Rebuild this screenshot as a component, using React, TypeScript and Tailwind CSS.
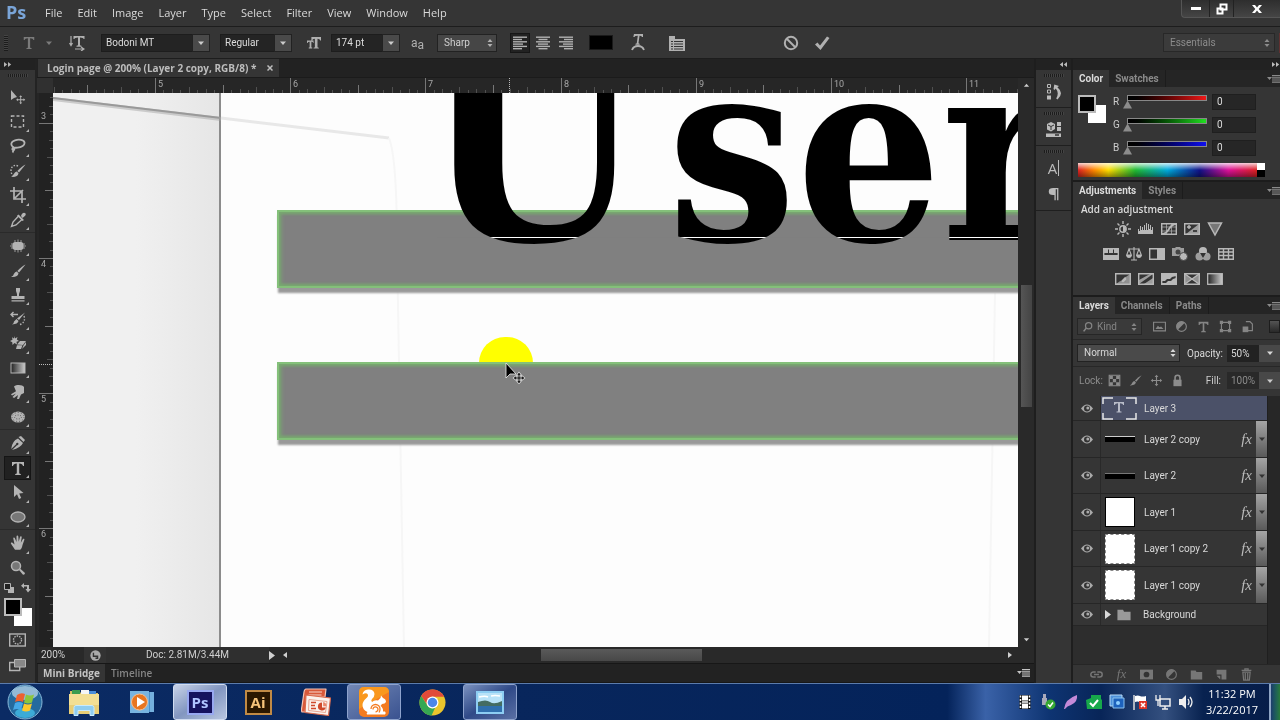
import React from "react";
import type { ReactNode } from "react";

type IconProps = { children: ReactNode; className?: string; box?: string };

const Icon = ({ children, className = "size-4", box = "0 0 16 16" }: IconProps) => (
  <svg viewBox={box} className={`shrink-0 ${className}`} fill="currentColor" aria-hidden="true">
    {children}
  </svg>
);

const line = { fill: "none", stroke: "currentColor", strokeWidth: 1.4 };

const Down = ({ className = "size-2" }: { className?: string }) => (
  <Icon className={className} box="0 0 8 8"><path d="M1 2.5h6L4 6z" /></Icon>
);

const UpDown = () => (
  <Icon className="h-2.5 w-2" box="0 0 8 10"><path d="M1.500 4h5L4 1zM1.500 6h5L4 9z" /></Icon>
);

const Brush = () => (
  <>
    <path d="M15.500 1.500 9 9.500 7.300 8Q12 3 15.500 1.500z" />
    <path d="M6.700 8.500 8.500 10.300Q8 14.500 1 14q2.500-1 3-3.300 1-2 2.700-2.200z" />
  </>
);

const MoveCross = () => (
  <path d="M8 1l2.300 2.700H8.700v3.600h3.600V5.700L15 8l-2.700 2.300V8.700H8.700v3.600h1.600L8 15l-2.300-2.700h1.600V8.700H3.700v1.600L1 8l2.700-2.300v1.600h3.600V3.700H5.700z" />
);

const Hand = () => (
  <path d="M4.500 14 1 8.700c-.6-1 .7-1.700 1.500-.9L4.500 9.600 3.300 3.500C3.100 2.300 4.500 2 4.900 3.200L6.500 7V1.500c0-1.300 1.700-1.300 1.800 0L8.700 6.800 10 2c.3-1.200 1.900-.8 1.700.4l-.9 5.400 2-3.600c.7-1 2-.4 1.500.8L12.500 10c-.3 2.300-1.200 4-2.300 4.800H5z" />
);

const FxText = ({ className = "" }: { className?: string }) => (
  <span className={`font-['Liberation_Serif',serif] italic ${className}`}>fx</span>
);

const toolGroups: { name: string; glyph: ReactNode; plain?: boolean }[][] = [
  [
    { name: "Move", plain: true, glyph: <><path d="M1 1v10l3-2 3-1z" /><g transform="translate(5.500 5.500) scale(.65)"><MoveCross /></g></> },
    { name: "Marquee", glyph: <rect x="1.500" y="2" width="12" height="11" {...line} strokeDasharray="3 2" /> },
    { name: "Lasso", glyph: <path d="M3.500 9.500C0 7 1 3.500 5 2.300s9-.5 9.500 2.200-3 5-7 5.200-4.500-.5-5 .8.500 2 1.500 1.500-.5-2.500-2-1.500M3.500 12q-.5 2-1 2.500" {...line} strokeWidth="1.800" /> },
    { name: "Quick selection", glyph: <><path d="M8 3C4 1 1 4 1 7.500S3 13 5 13" {...line} strokeDasharray="1.500 1.500" /><Brush /></> },
    { name: "Crop", glyph: <path d="M4 0v12h12M0 4h12v12M5 11 13 3" {...line} strokeWidth="1.700" /> },
    { name: "Eyedropper", glyph: <><path d="M9 3.500 3 10 1.500 14.500 6 13l6.500-6" {...line} /><path d="M8.500 2.500 14 8l-1.500 1L7 3.800zM11 4c1-3 3-4 4.300-2.700S15 4.500 12.500 6z" /></> },
  ],
  [
    { name: "Healing brush", glyph: <><rect x="2.500" y="4" width="11" height="8" rx="3" /><path d="M1 6h14M0 8h16M1 10h14M5 2v12M8 1.500v13M11 2v12" stroke="currentColor" strokeWidth=".8" /></> },
    { name: "Brush", glyph: <Brush /> },
    { name: "Clone stamp", glyph: <path d="M6 1h4v3L9 7v2h5.500v3h-13V9H7V7L6 4zM1.500 13.200h13v1.300h-13z" /> },
    { name: "History brush", glyph: <><path d="M15 1.500 9 9 7 7.500zM6.500 8 8.500 10Q8 13 2 13.500q2-1 2-3z" /><path d="M1 3.500h7M3.500 1 1 3.500 3.500 6" {...line} /><path d="M14 5q2 6-4 8.500" {...line} strokeDasharray="1.500 1.500" /></> },
    { name: "Eraser", glyph: <><path d="M7 8.500 10 5h6l-3 4zM7 9.200h5.500L11 13H6zM13.500 9.500 16 6v3l-4 4z" /><path d="m4 0 1 2.500L7.500 1 6.800 3.500 9 5 6.500 5.800 7 8.500 4.500 7 2.500 9l-.2-2.800L0 5l2.500-1.200L2 1.200 4 2.500z" /></> },
    { name: "Gradient", glyph: <><rect x="1" y="3" width="14" height="10" fill="url(#toolGradient)" stroke="currentColor" /></> },
    { name: "Smudge", glyph: <path d="M4 2.500C7 0 13 1 14 3v6l-3 1.500-2 4.500H7l1-4-4 3-1.500-1L6 9.500 2 11.500l-1-1.300 5-3z" /> },
    { name: "Sponge", glyph: <><ellipse cx="8" cy="8" rx="7" ry="5.500" /><ellipse cx="8" cy="8" rx="6" ry="4.500" fill="none" stroke="#444" strokeWidth=".8" strokeDasharray="1 2" /><ellipse cx="8" cy="8" rx="3.500" ry="2" fill="none" stroke="#444" strokeWidth=".8" strokeDasharray="1 1.500" /></> },
  ],
  [
    { name: "Pen", glyph: <><path d="m11 1 4 4-1.500 2-5-5z" /><path d="M8 3.500 13 8q-2 4.500-11 7L7 10.200a1.200 1.200 0 1 0-.9-.9L1.200 14Q2 6 8 3.500z" /></> },
    { name: "Type", glyph: <path d="M2 2h12v4h-1q-.4-2.200-3.800-2.400V13q0 1 1.600 1v1H5.200v-1q1.600 0 1.600-1V3.600Q3.400 3.800 3 6H2z" /> },
    { name: "Path selection", glyph: <path d="M4 1v12l3-2.700L9 15l2.200-1-2-4.500L13.500 9z" /> },
    { name: "Ellipse", glyph: <ellipse cx="8" cy="8" rx="7" ry="5" fill="#777" stroke="currentColor" strokeWidth="1.300" /> },
  ],
  [
    { name: "Hand", glyph: <Hand /> },
    { name: "Zoom", plain: true, glyph: <><circle cx="6" cy="6" r="4.500" fill="#777" stroke="currentColor" strokeWidth="1.500" /><path d="m9 10 1.300-1.300L15 13q0 2-2 1.800z" /></> },
  ],
];

const ToolRail = () => (
  <aside className="flex w-[37px] shrink-0 flex-col border-r-2 border-[#232323] bg-[#353535] text-[#b4b4b4]">
    <div className="flex h-[11px] shrink-0 items-center bg-[#222] pl-1">
      <Icon className="h-[5px] w-2" box="0 0 10 6"><path d="M0 0l4 3-4 3zM5 0l4 3-4 3z" /></Icon>
    </div>
    <div className="mx-auto mt-1 mb-2 h-[3px] w-5 shrink-0 bg-[repeating-linear-gradient(90deg,#1c1c1c_0_1px,#444_1px_2px)]" />
    {toolGroups.map((group, i) => (
      <div
        key={i}
        className={`flex shrink-0 flex-col ${["h-[148px]", "h-[196px]", "h-[99px]", "h-[49px]"][i]} ${i < 3 ? "mb-px border-b border-[#2a2a2a]" : ""}`}
      >
        {group.map((tool) => (
          <button
            key={tool.name}
            aria-label={tool.name}
            className={`relative mx-1 flex flex-1 items-center pl-[6px] ${tool.name === "Type" ? "bg-[#212121] outline outline-[#151515] -outline-offset-1" : ""}`}
          >
            <Icon className="size-4">{tool.glyph}</Icon>
            {!tool.plain && <Icon className="absolute right-[2px] bottom-[2px] size-[3px]" box="0 0 3 3"><path d="M3 0v3H0z" /></Icon>}
          </button>
        ))}
      </div>
    ))}
    <div className="flex h-4 shrink-0 items-center justify-between px-1">
      <Icon className="size-[10px]" box="0 0 10 10"><path d="M4 4h6v6H4z" /><path d="M.5.5h6v6h-6z" fill="#222" stroke="currentColor" /></Icon>
      <Icon className="size-[10px]" box="0 0 10 10"><path d="M3 0v2h5v4h2L7 9.500 4.500 6H6V3.500H3v2L0 2.700z" /></Icon>
    </div>
    <div className="relative mt-[2px] ml-1 size-7 shrink-0">
      <button aria-label="Background color" className="absolute right-0 bottom-0 size-[18px] bg-white" />
      <button aria-label="Foreground color" className="absolute top-0 left-0 size-[18px] border-2 border-[#bbb] bg-black" />
    </div>
    <button aria-label="Quick mask" className="mt-[5px] flex h-[18px] shrink-0 items-center pl-[9px]">
      <Icon className="h-[14px] w-[17px]" box="0 0 17 14"><rect x=".7" y="1" width="15.600" height="12" {...line} /><circle cx="8.500" cy="7" r="4" {...line} strokeDasharray="1.500 1" /></Icon>
    </button>
    <button aria-label="Screen mode" className="mt-[7px] flex h-[18px] shrink-0 items-center pl-[9px]">
      <Icon className="h-[14px] w-[17px]" box="0 0 17 14"><path d="M.7 4.500h10v8H.7z" {...line} /><path d="M5.500 1.500h11V9h-11z" fill="#888" stroke="currentColor" /></Icon>
    </button>
    <svg className="absolute size-0" aria-hidden="true">
      <defs>
        <linearGradient id="toolGradient"><stop stopColor="#222" /><stop offset="1" stopColor="#ccc" /></linearGradient>
      </defs>
    </svg>
  </aside>
);

const menus = ["File", "Edit", "Image", "Layer", "Type", "Select", "Filter", "View", "Window", "Help"];

const MenuBar = () => (
  <header className="flex h-[27px] shrink-0 items-start border-b border-[#1d1d1d] bg-[#353535]">
    <span className="w-9 pl-[6px] font-['Open_Sans',sans-serif] text-[18px] leading-6 font-bold text-[#7aa5d8]">Ps</span>
    <nav className="flex flex-1 gap-px pl-[2px] font-['Open_Sans',sans-serif] text-[11px] leading-[26px] text-[#dadada]">
      {menus.map((m) => <button key={m} className="px-[7px]">{m}</button>)}
    </nav>
    <div className="flex h-[18px] rounded-bl border-b border-l border-[#555] bg-gradient-to-b from-[#2e2e2e] to-[#454545] text-white">
      <button aria-label="Minimize" className="flex w-[27px] items-center justify-center"><Icon className="h-[3px] w-[10px]" box="0 0 10 3"><path d="M0 0h10v3H0z" /></Icon></button>
      <button aria-label="Restore" className="flex w-[25px] items-center justify-center border-x border-[#222]"><Icon className="size-3" box="0 0 12 12"><path d="M4.500 1.500h6v5h-6zM1.500 5.500h5v5h-5z" fill="none" stroke="currentColor" strokeWidth="2" /></Icon></button>
      <button aria-label="Close" className="flex w-[46px] items-center justify-center"><Icon className="h-2 w-[10px]" box="0 0 10 8"><path d="M0 0h3l2 2.500L7 0h3L6.700 4 10 8H7L5 5.500 3 8H0l3.300-4z" /></Icon></button>
    </div>
  </header>
);

const Combo = ({ label, value, wide }: { label: string; value: string; wide: string }) => (
  <label className="relative flex items-center">
    <select aria-label={label} className={`h-[18px] appearance-none border border-[#1d1d1d] bg-[#242424] pl-1 text-[10px] leading-4 text-[#dcdcdc] ${wide}`}><option>{value}</option></select>
    <span className="pointer-events-none absolute right-0 flex h-[18px] w-[18px] items-center justify-center border border-[#222] bg-[#4a4a4a] text-[#ccc]"><Down /></span>
  </label>
);

const AlignGlyph = ({ kind }: { kind: "left" | "center" | "right" }) => (
  <Icon className="h-[14px] w-[14px]" box="0 0 14 14">
    {[14, 9, 14, 10, 14, 9].map((w, i) => {
      const x = kind === "left" ? 0 : kind === "right" ? 14 - w : (14 - w) / 2;
      return <rect key={i} x={x} y={0.5 + i * 2.300} width={w} height="1.400" />;
    })}
  </Icon>
);

const OptionsBar = () => (
  <div className="flex h-8 shrink-0 items-center border-b border-[#1d1d1d] bg-[#353535] text-[#b0b0b0]">
    <div className="ml-1 h-4 w-1 bg-[repeating-linear-gradient(0deg,#1c1c1c_0_1px,#444_1px_2px)]" />
    <button aria-label="Tool preset" className="ml-[15px] flex items-center gap-[10px] text-[#7b7b7b]">
      <Icon className="size-3"><path d="M1 0h14v4h-1q-.4-2.200-4.500-2.200V14q0 1 2 1v1h-7v-1q2 0 2-1V1.800Q2.400 1.800 2 4H1z" /></Icon><Down />
    </button>
    <button aria-label="Text orientation" className="ml-4"><Icon className="size-4"><path d="M4.500 1h11v3h-1q0-1.500-3.500-1.500V10q0 .7 1.500.7v1H7.500v-1q1.500 0 1.500-.7V2.500Q5.500 2.500 5.500 4h-1z" /><path d="M2 1v9M.5 8 2 10.500 3.500 8M6 14h8M12 12l3 2-3 2" {...line} strokeWidth="1.200" /></Icon></button>
    <div className="ml-[16px] flex items-center gap-[10px]">
      <Combo label="Font family" value="Bodoni MT" wide="w-[109px]" />
      <Combo label="Font style" value="Regular" wide="w-[72px]" />
      <div className="ml-1 flex items-center gap-[9px]">
        <Icon className="h-3.5 w-4"><path d="M5 1h11v4h-1q0-2-3-2v9.500q0 .8 1.500.8v1h-6v-1q1.500 0 1.500-.8V3Q6 3 6 5H5zM0 5h7.500v3H7q0-1.500-2-1.500v6q0 .7 1 .7v1H2v-1q1 0 1-.7v-6Q.7 6.500.7 8H0z" /></Icon>
        <Combo label="Font size" value="174 pt" wide="w-[69px]" />
      </div>
    </div>
    <span aria-hidden="true" className="ml-[11px] w-[15px] text-[12px] leading-4">a<span className="relative top-[2px]">a</span></span>
    <label className="relative ml-[11px] flex items-center">
      <select aria-label="Anti-aliasing" className="h-[18px] w-[60px] appearance-none border border-[#222] bg-[#464646] pl-[6px] text-[10px] leading-4 text-[#cfcfcf]"><option>Sharp</option></select>
      <span className="pointer-events-none absolute right-[3px]"><UpDown /></span>
    </label>
    <div className="ml-[13px] flex items-center gap-[3px]">
      <button aria-label="Align left" className="flex size-5 items-center justify-center border border-[#161616] bg-[#222]"><AlignGlyph kind="left" /></button>
      <button aria-label="Align center" className="flex size-5 items-center justify-center"><AlignGlyph kind="center" /></button>
      <button aria-label="Align right" className="flex size-5 items-center justify-center"><AlignGlyph kind="right" /></button>
    </div>
    <button aria-label="Text color" className="ml-[13px] h-[15px] w-6 border border-[#1a1a1a] bg-black" />
    <button aria-label="Warp text" className="ml-[17px]"><Icon className="h-[17px] w-4" box="0 0 16 17"><path d="M4 0h9v3h-1q-.3-1.300-2.500-1.300L8.500 9q0 .7 1.200.8v1H5.500v-1q1.200 0 1.300-.8l1-7.300Q4.800 1.700 4.300 3h-1z" /><path d="M2 16q1.500-4 6-4t6 4" {...line} strokeWidth="1.800" /></Icon></button>
    <button aria-label="Character panel" className="ml-[23px]"><Icon className="size-4"><path d="M0 1h6v3h10v12H0z" /><path d="M2 6.500h2M5 6.500h9M2 9h2M5 9h9M2 11.500h2M5 11.500h9M2 14h2M5 14h9" stroke="#333" /></Icon></button>
    <button aria-label="Cancel" className="ml-[98px]"><Icon className="size-4"><circle cx="8" cy="8" r="6.200" fill="none" stroke="currentColor" strokeWidth="2" /><path d="m4 4 8 8" stroke="currentColor" strokeWidth="2" /></Icon></button>
    <button aria-label="Commit" className="ml-[15px]"><Icon className="size-4"><path d="M1 9.500 3.500 7.500 6 10.500 13 1.500 15.500 3 6.500 15z" /></Icon></button>
    <label className="relative ml-auto flex items-center">
      <select aria-label="Workspace" className="h-[19px] w-28 appearance-none border border-[#282828] bg-[#3b3b3b] pl-[6px] text-[10px] leading-4 text-[#8c8c8c]"><option>Essentials</option></select>
      <span className="pointer-events-none absolute right-1 text-[#8c8c8c]"><UpDown /></span>
    </label>
    <div className="ml-1 h-5 w-px bg-[#603030]" />
  </div>
);

const UNIT = 135.2;

const TopRuler = () => (
  <svg className="h-[15px] w-full min-w-0 flex-1 bg-[#262626]" aria-hidden="true">
    {Array.from({ length: 116 }, (_, i) => {
      const x = Math.round(102 + ((i - 12) * UNIT) / 16);
      const k = (i - 12 + 160) % 16;
      const h = k === 0 ? 15 : k === 8 ? 8 : k % 4 === 0 ? 6 : k % 2 === 0 ? 4 : 3;
      return <rect key={i} x={x} y={15 - h} width="1" height={h} fill={h > 6 ? "#777" : "#505050"} />;
    })}
    <path d="M456.500 0v15" stroke="#bbb" strokeDasharray="1 1" />
    {[5, 6, 7, 8, 9, 10, 11].map((n, i) => (
      <text key={n} x={105 + Math.round(i * UNIT)} y="9" fill="#a8a8a8" className="text-[9px]">{n}</text>
    ))}
  </svg>
);

const SideRuler = () => (
  <svg className="h-full w-[14px] shrink-0 bg-[#222]" aria-hidden="true">
    {Array.from({ length: 66 }, (_, i) => {
      const y = Math.round(165 + ((i - 19) * UNIT) / 16);
      const k = (i - 19 + 160) % 16;
      const h = k === 0 ? 14 : k === 8 ? 8 : k % 4 === 0 ? 6 : k % 2 === 0 ? 4 : 3;
      return <rect key={i} x={14 - h} y={y} width={h} height="1" fill={h > 6 ? "#777" : "#505050"} />;
    })}
    <path d="M0 271.500h14" stroke="#bbb" strokeDasharray="1 1" />
    {[3, 4, 5, 6].map((n, i) => (
      <text key={n} x="2" y={[26, 174, 309, 444][i]} fill="#a8a8a8" className="text-[9px]">{n}</text>
    ))}
  </svg>
);

const FieldBar = ({ className }: { className: string }) => (
  <div className={`absolute -right-2 left-[224px] h-[78px] border-y-2 border-l-2 border-[#84c07a] bg-[#808080] shadow-[inset_2px_0_4px_#78a870,inset_0_2px_3px_#78a870,inset_0_-2px_3px_#78a870,1px_5px_2px_#999] ${className}`} />
);

const Canvas = () => (
  <div className="relative min-w-0 flex-1 overflow-hidden bg-[#fdfdfd]">
    <div className="absolute inset-y-0 left-0 w-[168px] border-r-2 border-[#8c8c8c] bg-gradient-to-r from-[#f0f0f0] via-[#f0f0f0] to-[#e6e6e6]" />
    <svg className="absolute inset-0 h-full w-full" aria-hidden="true">
      <path d="M0 6 168 26" stroke="#a0a0a0" strokeWidth="4" opacity=".45" />
      <path d="M0 5 168 25" stroke="#999" strokeWidth="2" />
      <path d="M168 25 336 45" stroke="#e8e8e8" strokeWidth="3" />
      <path d="M336 45q8 20 8 110l7 400M942 200l-6 355" stroke="#f6f6f6" strokeWidth="2" fill="none" />
    </svg>
    <FieldBar className="top-[117px]" />
    <div className="absolute top-[-68px] left-[369px] flex gap-6 text-[254px] leading-[252px] font-bold whitespace-nowrap text-black">
      <span className="font-['DejaVu_Serif',serif]">U</span>
      <span className="font-['DejaVu_Serif_Condensed','DejaVu_Serif',serif]">ser</span>
    </div>
    <div className="absolute top-[144px] right-0 left-[384px] h-px bg-white mix-blend-difference" />
    <div className="absolute top-[244px] left-[426px] h-[26px] w-[54px] rounded-t-full bg-[#ff0]" />
    <FieldBar className="top-[269px]" />
    <svg viewBox="0 0 22 22" className="absolute top-[269px] left-[452px] size-[22px]" aria-hidden="true">
      <path d="M1 1v15l4-4h6z" fill="#000" stroke="#eee" strokeWidth=".8" />
      <g transform="translate(8 10) scale(.75)" stroke="#ddd" strokeWidth="2"><MoveCross /></g>
      <g transform="translate(8 10) scale(.75)" fill="#000"><MoveCross /></g>
    </svg>
  </div>
);

const Lines = () => (
  <Icon className="h-2 w-[13px]" box="0 0 13 8"><path d="M0 2h5L2.500 5zM5 0h8v1.200H5zM5 2.200h8v1.200H5zM5 4.400h8v1.200H5zM5 6.600h8v1.200H5z" /></Icon>
);

const Document = () => (
  <main className="flex min-w-0 flex-1 flex-col bg-[#262626]">
    <div className="flex h-[19px] shrink-0 border-b border-[#1b1b1b] bg-[#222] pl-px">
      <div className="flex items-center gap-[11px] bg-[#353535] pr-[6px] pl-[9px] font-['Open_Sans',sans-serif] text-[10px] font-bold whitespace-nowrap text-[#bdbdbd]">
        Login page @ 200% (Layer 2 copy, RGB/8) *
        <button aria-label="Close document"><Icon className="size-[6px]" box="0 0 6 6"><path d="m.5.500 5 5m0-5-5 5" stroke="currentColor" strokeWidth="1.500" /></Icon></button>
      </div>
    </div>
    <div className="flex min-h-0 flex-1">
      <div className="flex min-w-0 flex-1 flex-col">
        <div className="flex h-[15px] shrink-0">
          <div className="w-4 shrink-0 bg-[#303030]" />
          <TopRuler />
        </div>
        <div className="flex min-h-0 flex-1 pl-[2px]">
          <SideRuler />
          <Canvas />
        </div>
      </div>
      <div className="flex w-4 shrink-0 flex-col items-center bg-[#292929] text-[#ccc]">
        <Down className="mt-1 size-[7px] rotate-180" />
        <div className="mt-[196px] h-[122px] w-[11px] bg-gradient-to-r from-[#555] to-[#444]" />
        <Down className="mt-auto mb-1 size-[7px]" />
      </div>
    </div>
    <div className="flex h-4 shrink-0 items-center bg-[#292929] text-[10px] leading-4 text-[#d0d0d0]">
      <span className="w-[47px] pl-1">200%</span>
      <span className="flex h-4 w-[22px] items-center justify-center bg-[#333] text-[#aaa]"><Icon className="size-[11px]"><circle cx="8" cy="8" r="7.500" /><path d="M5 4v5h6v3H8" stroke="#333" strokeWidth="2" fill="none" /></Icon></span>
      <span className="w-[163px] bg-[#2f2f2f] text-center">Doc: 2.81M/3.44M</span>
      <button aria-label="Status options"><Icon className="h-[9px] w-[6px]" box="0 0 6 9"><path d="M0 0l6 4.500L0 9z" /></Icon></button>
      <Icon className="ml-2 h-[6px] w-1" box="0 0 4 6"><path d="M4 0v6L0 3z" /></Icon>
      <div className="relative mx-[6px] h-3 flex-1"><div className="absolute left-[35%] h-3 w-[161px] bg-gradient-to-b from-[#5a5a5a] to-[#484848]" /></div>
      <Icon className="mr-[22px] h-[6px] w-1" box="0 0 4 6"><path d="M0 0v6l4-3z" /></Icon>
    </div>
    <div className="flex h-5 shrink-0 border-y border-[#171717] bg-[#222] pl-px font-['Open_Sans',sans-serif] text-[10px] leading-[17px] font-bold text-[#c4c4c4]">
      <button className="bg-[#353535] px-[5px]">Mini Bridge</button>
      <button className="px-[6px] font-semibold text-[#858585]">Timeline</button>
      <span className="mr-1 ml-auto flex items-center"><Lines /></span>
    </div>
  </main>
);

const Grip = () => (
  <div className="mx-auto mt-1 h-[3px] w-5 bg-[repeating-linear-gradient(90deg,#1c1c1c_0_1px,#444_1px_2px)]" />
);

const Dock = () => (
  <aside className="flex w-[39px] shrink-0 flex-col border-x-2 border-[#1e1e1e] bg-[#353535] text-[#bbb]">
    <div className="flex h-[11px] items-center justify-end bg-[#222] pr-1"><Icon className="h-[5px] w-2" box="0 0 10 6"><path d="M5 0v6L1 3zM10 0v6L6 3z" /></Icon></div>
    <div className="h-[38px] border-b border-[#1f1f1f]"><Grip /><button aria-label="History" className="mx-auto mt-[7px] block"><Icon><path d="M1.500.5h3v3h-3zM1.500 6h3v3h-3z" fill="none" stroke="currentColor" /><path d="M1 11.500h4v4H1z" /><path d="m7.500 5 .8-4.500L13 2l-1.600 1.200Q18.500 9 11.500 15.500l-1.300-1Q13.500 9 9.800 4.500L8.500 6z" /></Icon></button></div>
    <div className="h-[38px] border-b border-[#1f1f1f]"><Grip /><button aria-label="Device preview" className="mx-auto mt-[7px] block"><Icon><path d="M5 0l4 2v5L5 9.500 1 7.500V2z" /><path d="m2 3 3 1.500L8 3M5 4.500V8" stroke="#333" fill="none" /><path d="M11 0h4v4h-4zM11 5h4v4h-4zM0 11.500h15V15H0z" /><path d="M9 13h4" stroke="#333" strokeWidth="1.500" /></Icon></button></div>
    <div className="h-[65px] border-b border-[#1f1f1f]">
      <Grip />
      <button aria-label="Character" className="mx-auto mt-[7px] flex h-4 items-center gap-px font-['Open_Sans',sans-serif] text-[15px] leading-4">A<span className="h-4 w-px bg-[#bbb]" /></button>
      <button aria-label="Paragraph" className="mx-auto mt-[11px] block"><Icon className="size-[14px]"><path d="M7 1h6v14h-1.500V2.500h-1.500V15H8.500V9C4 9.500 2 8 2 5s2-4 5-4z" /></Icon></button>
    </div>
  </aside>
);

const PanelTabs = ({ tabs }: { tabs: string[] }) => (
  <div role="tablist" className="flex h-[17px] shrink-0 bg-[#252525] text-[10px] leading-[16px] font-bold text-[#8a8a8a]">
    {tabs.map((t, i) => (
      <button key={t} role="tab" aria-selected={i === 0} className={i === 0 ? "bg-[#353535] px-[6px] text-[#dadada]" : "border-r border-[#1c1c1c] px-[6px]"}>{t}</button>
    ))}
    <span className="ml-auto flex items-center"><Lines /></span>
  </div>
);

const channels = [
  { name: "R", bar: "bg-gradient-to-r from-black to-[#f01818]" },
  { name: "G", bar: "bg-gradient-to-r from-black to-[#20e020]" },
  { name: "B", bar: "bg-gradient-to-r from-black to-[#1010f0]" },
];

const ColorPanel = () => (
  <section className="flex h-[112px] shrink-0 flex-col border-b-2 border-[#1c1c1c]">
    <PanelTabs tabs={["Color", "Swatches"]} />
    <div className="flex pt-[3px] pl-[5px]">
      <div className="relative mt-[5px] size-7">
        <button aria-label="Background" className="absolute right-0 bottom-0 size-[18px] bg-white" />
        <button aria-label="Foreground" className="absolute top-0 left-0 size-[18px] border-2 border-[#bbb] bg-black" />
      </div>
      <div className="ml-[7px]">
        {channels.map((c) => (
          <div key={c.name} className="flex h-[23px] items-center text-[10px] text-[#ccc]">
            <label htmlFor={c.name} className="w-[10px]">{c.name}</label>
            <div className="flex w-[88px] flex-col">
              <div className={`mx-1 h-[6px] border border-[#888] ${c.bar}`} />
              <input type="range" aria-label={`${c.name} slider`} defaultValue={0} max={255} className="h-2 w-full appearance-none bg-transparent [&::-webkit-slider-thumb]:h-2 [&::-webkit-slider-thumb]:w-[9px] [&::-webkit-slider-thumb]:appearance-none [&::-webkit-slider-thumb]:bg-[#8c8c8c] [&::-webkit-slider-thumb]:[clip-path:polygon(50%_0,100%_100%,0_100%)]" />
            </div>
            <input id={c.name} defaultValue="0" className="ml-px h-4 w-11 border border-[#1f1f1f] bg-[#262626] pl-1 text-[10px] text-[#ddd]" />
          </div>
        ))}
      </div>
    </div>
    <div className="mt-[4px] ml-[5px] flex h-[14px] w-[187px]">
      <div className="flex-1 bg-[linear-gradient(180deg,#ffffffcc,transparent_50%,#00000066),linear-gradient(90deg,#d22,#f80_9%,#fd0_17%,#2b3_32%,#0ad_50%,#118_68%,#d19_84%,#d22)]" />
      <div className="w-2 bg-[linear-gradient(white_50%,black_50%)]" />
    </div>
  </section>
);

const frame = <path d="M.7 2.700h14.600v10.600H.7z" {...line} />;

const adjustments: { name: string; glyph: ReactNode }[][] = [
  [
    { name: "Brightness", glyph: <><circle cx="8" cy="8" r="3.200" {...line} /><path d="M8 5v6a3 3 0 0 0 0-6z" /><path d="M8 0v3M8 13v3M0 8h3M13 8h3M2.500 2.500l2 2M11.500 11.500l2 2M13.500 2.500l-2 2M4.500 11.500l-2 2" {...line} /></> },
    { name: "Levels", glyph: <path d="M0 13V8h1v2h1V5h1v4h1V6h1v3h1V4h1v5h1V2h1v7h1V3h1v5h1V4h1v5h1V6h1v7z" /> },
    { name: "Curves", glyph: <>{frame}<path d="M5.500 3v10M10.500 3v10M1 6h14M1 10h14" stroke="currentColor" strokeWidth=".7" /><path d="M1 13c8 0 6-10 14-10" {...line} strokeWidth="1.800" /></> },
    { name: "Exposure", glyph: <>{frame}<path d="M15 3v10H2z" opacity=".8" /><path d="M3 6h4M5 4v4" {...line} /><path d="M9 10h4" stroke="#222" strokeWidth="1.500" /></> },
    { name: "Vibrance", glyph: <path d="M1.500 2h13L8 14z" fill="#777" stroke="currentColor" strokeWidth="1.500" /> },
  ],
  [
    { name: "Hue", glyph: <>{frame}<path d="M1 3h4v4H1zM6 3h4v4H6zM11 3h4v4h-4zM1 9h14v4H1z" /></> },
    { name: "Color balance", glyph: <><path d="M3 3h10M8 1v13M5 14h6M3 3 .7 9h4.600zM13 3l-2.300 6h4.600z" {...line} strokeWidth="1.100" /><path d="M0 9h6q-.5 3-3 3T0 9zM10 9h6q-.5 3-3 3t-3-3z" /></> },
    { name: "Black and white", glyph: <>{frame}<path d="M8 3h7v10H8z" /></> },
    { name: "Photo filter", glyph: <><path d="M0 2h3l1-1h4l1 1h3v8H0z" opacity=".8" /><circle cx="6" cy="6" r="2.500" fill="#444" /><circle cx="11.500" cy="10.500" r="4" stroke="#444" /></> },
    { name: "Channel mixer", glyph: <><circle cx="8" cy="5" r="4" /><circle cx="4.500" cy="10.500" r="4" opacity=".8" /><circle cx="11.500" cy="10.500" r="4" opacity=".8" /><path d="m8 12-3-5h6z" fill="#333" /></> },
    { name: "Color lookup", glyph: <>{frame}<path d="M5.500 3v10M10.500 3v10M1 6h14M1 9.500h14" {...line} /></> },
  ],
  [
    { name: "Invert", glyph: <>{frame}<path d="M1 13h14V3z" opacity=".7" /><circle cx="8" cy="8" r="3" fill="#333" /><path d="M10.200 5.800a3 3 0 0 1-4.400 4.400z" /></> },
    { name: "Posterize", glyph: <>{frame}<path d="M1 9 12 3h3L1 13zM6 13l9-6v6z" opacity=".8" /></> },
    { name: "Threshold", glyph: <>{frame}<path d="M1 3h14v2l-4 1-2 2-3 0-2 2-3 0zM1 13v-1l4 0 2-2 3 0 2-2 3-1v6z" /></> },
    { name: "Selective color", glyph: <>{frame}<path d="m1 3 7 5-7 5zM15 3 8 8l7 5z" opacity=".7" /><path d="m1 3 7 5 7-5M1 13l7-5 7 5" {...line} /></> },
    { name: "Gradient map", glyph: <rect x=".7" y="2.700" width="14.600" height="10.600" fill="url(#toolGradient)" stroke="currentColor" strokeWidth="1.300" /> },
  ],
];

const AdjustmentsPanel = () => (
  <section className="flex h-[115px] shrink-0 flex-col border-b-2 border-[#1c1c1c]">
    <PanelTabs tabs={["Adjustments", "Styles"]} />
    <h2 className="px-2 pt-[2px] font-['Open_Sans',sans-serif] text-[10px] leading-4 font-semibold text-[#dadada]">Add an adjustment</h2>
    <div className="flex flex-col gap-[9px] pt-1 pr-4 text-[#b8b8b8]">
      {adjustments.map((row, i) => (
        <div key={i} className="flex justify-center gap-[7px]">
          {row.map((a) => <button key={a.name} aria-label={a.name}><Icon>{a.glyph}</Icon></button>)}
        </div>
      ))}
    </div>
  </section>
);

const Eye = () => (
  <Icon className="h-[9px] w-3" box="0 0 12 9"><path d="M0 4.500Q6-3.500 12 4.500 6 12.500 0 4.500z" /><circle cx="6" cy="4.500" r="3" fill="#333" /><circle cx="6.800" cy="4" r="1.500" /></Icon>
);

const layers: { name: string; thumb: string }[] = [
  { name: "Layer 2 copy", thumb: "h-[6px] bg-black border-t border-[#ccc]" },
  { name: "Layer 2", thumb: "h-[6px] bg-black border-t border-[#777]" },
  { name: "Layer 1", thumb: "h-[30px] bg-white border border-black" },
  { name: "Layer 1 copy 2", thumb: "h-[30px] bg-white border border-dashed border-[#888]" },
  { name: "Layer 1 copy", thumb: "h-[30px] bg-white border border-dashed border-[#888]" },
];

const FolderPath = () => <path d="M1 3h6l1 2h7v9H1z" />;
const HalfCircle = () => <><circle cx="8" cy="8" r="6" {...line} /><path d="M3.500 12A6 6 0 0 1 12 3.500z" /></>;

const EyeCell = () => (
  <button aria-label="Toggle visibility" className="flex w-7 shrink-0 items-center justify-center self-stretch border-r border-[#292929] text-[#aaa]"><Eye /></button>
);

const LayersPanel = () => (
  <section className="flex min-h-0 flex-1 flex-col">
    <PanelTabs tabs={["Layers", "Channels", "Paths"]} />
    <div className="flex h-[26px] shrink-0 items-center border-b border-[#272727] pl-1 text-[#858585]">
      <label className="relative mr-[11px] flex items-center">
        <select aria-label="Filter" className="h-[17px] w-[65px] appearance-none border border-[#262626] bg-[#3a3a3a] pl-[19px] text-[10px] leading-4"><option>Kind</option></select>
        <Icon className="pointer-events-none absolute left-[6px] size-[10px]"><circle cx="9" cy="6" r="5" {...line} strokeWidth="2" /><path d="M5 10 1 15" stroke="currentColor" strokeWidth="2.500" /></Icon>
        <span className="pointer-events-none absolute right-1"><UpDown /></span>
      </label>
      <div className="flex flex-1 items-center gap-[9px]">
        <Icon className="size-[13px]">{frame}<path d="m3 11 3-4 2 2 2-1 3 3z" /></Icon>
        <Icon className="size-[13px]"><HalfCircle /></Icon>
        <Icon className="size-[13px]"><path d="M2 2h12v4h-1q-.4-2-4-2v9q0 1 2 1v1H5v-1q2 0 2-1V4Q3.400 4 3 6H2z" /></Icon>
        <Icon className="size-[13px]"><path d="M3 3h10v10H3z" {...line} /><path d="M1 1h4v4H1zM11 1h4v4h-4zM1 11h4v4H1zM11 11h4v4h-4z" /></Icon>
        <Icon className="size-[13px]"><path d="M6 2h5l3 3v8H8" {...line} /><path d="M2 8h7v7H2z" /></Icon>
        <span className="ml-auto h-[13px] w-[11px] border border-[#1d1d1d] bg-gradient-to-b from-[#555] to-[#292929]" />
      </div>
    </div>
    <div className="flex h-[27px] shrink-0 items-center border-b border-[#272727] pl-1 text-[10px] text-[#d8d8d8]">
      <label className="relative flex items-center">
        <select aria-label="Blend mode" className="h-[18px] w-[103px] appearance-none border border-[#222] bg-[#4a4a4a] pl-[6px] text-[10px] leading-4"><option>Normal</option></select>
        <span className="pointer-events-none absolute right-[3px]"><UpDown /></span>
      </label>
      <label htmlFor="opacity" className="ml-[7px] w-10">Opacity:</label>
      <input id="opacity" defaultValue="50%" className="h-[17px] w-8 bg-[#222] pl-1 text-[10px]" />
      <button aria-label="Opacity slider" className="flex h-[17px] flex-1 items-center justify-center bg-[#484848]"><Down /></button>
    </div>
    <div className="flex h-[29px] shrink-0 items-center pb-[2px] pl-[6px] text-[10px] text-[#8c8c8c]">
      <span>Lock:</span>
      <div className="ml-[5px] flex gap-2">
        <button aria-label="Lock transparency"><Icon className="size-[13px]"><path d="M1.500 1.500h13v13h-13z" {...line} /><path d="M2 2h4v4H2zM10 2h4v4h-4zM6 6h4v4H6zM2 10h4v4H2zM10 10h4v4h-4z" /></Icon></button>
        <button aria-label="Lock pixels"><Icon className="size-[13px]"><Brush /></Icon></button>
        <button aria-label="Lock position"><Icon className="size-[13px]"><MoveCross /></Icon></button>
        <button aria-label="Lock all"><Icon className="size-[13px]"><path d="M5 8V4.500a3 3 0 0 1 6 0V8" {...line} strokeWidth="2" /><path d="M3 7h10v8H3z" /></Icon></button>
      </div>
      <label htmlFor="fill" className="mr-[6px] ml-auto text-[#ccc]">Fill:</label>
      <input id="fill" defaultValue="100%" className="h-[17px] w-8 bg-[#292929] pl-1 text-[10px]" />
      <span className="flex h-[17px] w-[21px] items-center justify-center bg-[#484848] text-[#ccc]"><Down /></span>
    </div>
    <div className="flex min-h-0 flex-1 bg-[#2d2d2d]">
      <ul className="flex-1 text-[10px] text-[#d8d8d8]">
        <li className="flex h-[25px] items-center border-b border-[#262626] bg-[#353535]">
          <EyeCell />
          <div className="flex h-full flex-1 items-center bg-[#4b5168] pl-px">
            <Icon className="h-[23px] w-[35px] text-[#e8e8e8]" box="0 0 35 23"><path d="M1 7V1h10M24 1h10v6M34 16v6H24M11 22H1v-6" fill="none" stroke="currentColor" strokeWidth="1.500" /><path d="M12 5h10v3h-1q0-1.700-3-1.700V14q0 .6 1.500.6v1h-5v-1q1.500 0 1.500-.6V6.300Q13 6.300 13 8h-1z" fill="#b8bcc8" /></Icon>
            <span className="ml-[7px]">Layer 3</span>
          </div>
        </li>
        {layers.map((l, i) => (
          <li key={l.name} className={`flex items-center border-b border-[#262626] bg-[#353535] ${i % 2 === 0 ? "h-[37px]" : "h-9"}`}>
            <EyeCell />
            <div className={`ml-1 w-[30px] ${l.thumb}`} />
            <span className="ml-[9px] flex-1">{l.name}</span>
            <FxText className="mr-1 text-[15px] text-[#bbb]" />
            <span className="flex w-[11px] items-center justify-center self-stretch bg-gradient-to-b from-[#a5a5a5] to-[#5a5a5a] text-[#333]"><Down /></span>
          </li>
        ))}
        <li className="flex h-[22px] items-center border-b border-[#262626] bg-[#353535]">
          <EyeCell />
          <Icon className="ml-1 h-[9px] w-[6px]" box="0 0 6 9"><path d="M0 0l6 4.500L0 9z" /></Icon>
          <Icon className="ml-[5px] h-[15px] w-4 text-[#999]"><FolderPath /></Icon>
          <span className="ml-[11px]">Background</span>
        </li>
      </ul>
      <div className="w-[13px] border-l border-[#1f1f1f] bg-[#272727]" />
    </div>
    <div className="flex h-[19px] shrink-0 items-center gap-3 border-t border-[#262626] pl-[17px] text-[#767676]">
      <button aria-label="Link layers"><Icon className="h-[13px] w-[13px]"><path d="M7 5H4a3 3 0 0 0 0 6h3M9 5h3a3 3 0 0 1 0 6H9M5 8h6" {...line} strokeWidth="1.800" /></Icon></button>
      <button aria-label="Layer style" className="w-[13px] text-[13px] leading-4"><FxText /></button>
      <button aria-label="Add mask"><Icon className="size-[13px]"><path d="M0 2h16v12H0z" /><circle cx="8" cy="8" r="3.500" fill="#333" /></Icon></button>
      <button aria-label="New adjustment"><Icon className="size-[13px]"><HalfCircle /></Icon></button>
      <button aria-label="New group"><Icon className="size-[13px]"><FolderPath /></Icon></button>
      <button aria-label="New layer"><Icon className="size-[13px]"><path d="M2 2h12v12H8V8H2zM2 9.500h4.500V14z" /></Icon></button>
      <button aria-label="Delete layer"><Icon className="size-[13px]"><path d="M2 3h12M6 3V1h4v2M3.500 5l1 10h7l1-10zM6.500 6v8M9.500 6v8" {...line} strokeWidth="1.500" /></Icon></button>
    </div>
  </section>
);

const Panels = () => (
  <aside className="flex w-[207px] shrink-0 flex-col bg-[#353535]">
    <div className="flex h-[11px] shrink-0 items-center justify-end bg-[#222] text-[#bbb]"><Icon className="h-[5px] w-2" box="0 0 10 6"><path d="M0 0l4 3-4 3zM5 0l4 3-4 3z" /></Icon></div>
    <ColorPanel />
    <AdjustmentsPanel />
    <LayersPanel />
  </aside>
);

const SquareLogo = ({ text, className }: { text: string; className: string }) => (
  <span className={`flex h-[25px] w-[27px] items-center justify-center border-2 font-['Open_Sans',sans-serif] text-[15px] leading-5 font-bold ${className}`}>{text}</span>
);

const apps: { name: string; open?: string; glyph: ReactNode }[] = [
  { name: "File Explorer", glyph: <Icon className="h-7 w-8" box="0 0 32 28"><path d="M2 3h9l2 2h17v17H2z" fill="#d9bd62" /><path d="M4 2h8v4H4z" fill="#3a9d50" /><path d="M13 2h8v4h-8z" fill="#f5f5f5" /><path d="M21 3h7v4h-7z" fill="#4c8ed8" /><path d="M1 6h30v20H1z" fill="#f3df94" /><path d="M1 17h30v9H1z" fill="#e8ce76" /><path d="M6 27.500v-8q0-2 2-2h16q2 0 2 2v8h-4v-5H10v5z" fill="#8fcdf0" stroke="#c8ebff" /></Icon> },
  { name: "Media Player", glyph: <Icon className="h-6 w-[26px]" box="0 0 26 24"><path d="M6 2h19v20H6z" fill="#4a91cb" /><path d="M22 2v20M24 2v20" stroke="#a0d0f0" /><path d="M1 1h19v22H1z" fill="#78b4e0" /><circle cx="10.500" cy="12" r="8" fill="#e87520" stroke="#f8c090" /><path d="m8 7 8 5-8 5z" fill="#fff" /></Icon> },
  { name: "Photoshop", open: "bg-gradient-to-br from-[#c8d3e8] via-[#8296c0] to-[#b8c6e0] border-[#d0dcf0]", glyph: <SquareLogo text="Ps" className="border-[#98a8f0] bg-[#15125e] text-[#b0c4ff]" /> },
  { name: "Illustrator", glyph: <SquareLogo text="Ai" className="border-[#c08a45] bg-[#2a1700] text-[#f5c37a]" /> },
  { name: "PowerPoint", glyph: <Icon className="h-7 w-[30px]" box="0 0 30 28"><path d="M5 1h20l-1 8H7L4 24H1q-1-1 0-6L3 4q.5-3 2-3z" fill="#d8593a" stroke="#f3c4b4" strokeWidth="1.200" strokeLinejoin="round" /><path d="M8 4h13M7.500 7h13" stroke="#f8d8cc" strokeWidth="1.200" /><path d="m5 7 24.500 3-2 17.500L4 24.500z" fill="#fbf1ec" stroke="#d9694c" strokeWidth="1.200" /><path d="M8 11.500l18 2-1.500 11-17-2z" fill="none" stroke="#e9a590" /><path d="M10 14.500h5M10 17.500h4M10 20.500h5" stroke="#cf4a2c" strokeWidth="1.600" /><path d="M21 14.500a4 4 0 1 0 3.800 5H21z" fill="#cf4a2c" /><path d="M22.200 14q3.200.5 3.200 4.300h-3.200z" fill="#e88468" /></Icon> },
  { name: "UC Browser", open: "bg-gradient-to-br from-[#7388b5] to-[#3a5290] border-[#8ea3cd]", glyph: <Icon className="size-[30px]" box="0 0 30 30"><rect width="30" height="30" rx="5" fill="#f47b20" /><path d="M0 22V5q0-5 5-5h20q5 0 5 5z" fill="#fba51e" opacity=".7" /><path d="M9 2.500q6-.5 6.500 4.500 0 3-2.500 5-1.500 1.500 0 3 2.500-2.500 6-1.500l2.500-2.500.5-2.500 2 2.500q3 1 3 4-1 2-4 2l-1.500 2q3 2 2.500 5.500h2q1.500 1.500 0 3H8q-1-1 .5-2.500-5-2-5-7 0-3.500 3.500-6.500 3-2.500 1.500-4.500Q7 5.500 3.500 7.500 4 3 9 2.500z" fill="#fff" /><path d="M12 22a4.500 4.500 0 0 1 9 0q0 2-1 3.500M14 22.500a2.500 2.500 0 1 1 2.500 2.300" fill="none" stroke="#f47b20" strokeWidth="1.300" /></Icon> },
  { name: "Chrome", glyph: <Icon className="size-[27px]" box="0 0 28 28"><circle cx="14" cy="14" r="13.500" fill="#eac52c" /><path d="M2.300 7.200A13.500 13.500 0 0 1 26 8H14a6 6 0 0 0-5.500 8z" fill="#e14a3a" /><path d="M2.300 7.200 8.800 17a6 6 0 0 0 8 2.300L13 27.500A13.500 13.500 0 0 1 2.300 7.200z" fill="#35a853" /><circle cx="14" cy="14" r="6.200" fill="#fff" /><circle cx="14" cy="14" r="4.900" fill="#4a86e8" /></Icon> },
  { name: "Pictures", open: "bg-gradient-to-br from-[#7c92bf] via-[#304a88] to-[#5a70a5] border-[#8ea3cd]", glyph: <Icon className="h-[23px] w-7" box="0 0 28 23"><rect width="28" height="23" fill="#8dcdf3" /><path d="M2 2h24v11H2z" fill="#b8e2f8" /><path d="M2 11q8-3 12 0t12-1v5H2z" fill="#446c63" /><path d="M2 15h24v6H2z" fill="#2f6fae" /><path d="M3 6q6-1.500 9 0M15 5q4-1 9 0" stroke="#fff" strokeWidth="1.500" fill="none" /></Icon> },
];

const tray: { name: string; glyph: ReactNode }[] = [
  { name: "Video", glyph: <><path d="M2.500 1h11v14h-11z" fill="#111" /><path d="M5 1.500h6v5H5zM5 9.500h6v5H5zM5 7.300h6v1.400H5z" fill="#fff" /><path d="M3.500 1.500v14M12.500 1.500v14" stroke="#fff" strokeWidth="1.500" strokeDasharray="2 1.500" /></> },
  { name: "USB", glyph: <><path d="M2 4h5v7H2zM3 0h3v4H3z" fill="#aab" /><circle cx="10.500" cy="10.500" r="5" fill="#35a832" /><path d="m8 10.500 2 2 3-4" stroke="#fff" strokeWidth="1.500" fill="none" /></> },
  { name: "Feather", glyph: <path d="M1 15Q2 5 14 1q1 7-6 10-4 1-6 4z" fill="#c48ad8" /> },
  { name: "Security", glyph: <><path d="M0 6 5 4V1h10v4l1 1v9H1z" fill="#17a84b" /><path d="m4 9 3 3 5-6" stroke="#fff" strokeWidth="2" fill="none" /></> },
  { name: "Display", glyph: <><path d="M1 1h12v11H1z" fill="#4d91da" stroke="#b8dcfa" /><path d="M4 4h11v10H4z" fill="#1d62bd" stroke="#8bc2f0" /><circle cx="9" cy="9" r="2" fill="#8fd0ff" /></> },
  { name: "Action center", glyph: <><path d="M2 1v15" stroke="#ddd" strokeWidth="1.500" /><path d="M3 2q3-1 5 0t6 0v6q-3 1-6 0t-5 0z" fill="#fff" /><path d="M7 7h8v8H7z" fill="#dc3428" /><path d="m9 9 4 4m0-4-4 4" stroke="#fff" strokeWidth="1.600" /></> },
  { name: "Network", glyph: <><path d="M5 5h10v7H5zM7 15h6M10 12v3" fill="none" stroke="#eee" strokeWidth="1.500" /><path d="M1 1v5h4V1M3 6v6" stroke="#eee" strokeWidth="1.300" fill="none" /></> },
  { name: "Volume", glyph: <><path d="M1 5h3l4-4v14l-4-4H1z" fill="#eee" /><path d="M10 5q2 3 0 6M12 3q4 5 0 10" stroke="#eee" strokeWidth="1.300" fill="none" /></> },
];

const Taskbar = () => (
  <footer className="flex h-[37px] shrink-0 items-center border-t border-[#5c7cac] bg-[linear-gradient(90deg,#0b2b64,#08265c_40%,#04235a_74%,#3a62a8_77%,#0e3472_82%,#082558_86%,#34507f_91%,#082250_94%,#061c48)]">
    <button aria-label="Start" className="flex w-[57px] justify-center pr-[7px]">
      <Icon className="size-9" box="0 0 36 36">
        <circle cx="18" cy="18" r="17" fill="#256a9e" stroke="#88b8d8" /><ellipse cx="18" cy="9" rx="13" ry="7" fill="#b8d5e8" opacity=".75" /><ellipse cx="18" cy="29" rx="10" ry="5" fill="#46c8f0" opacity=".7" />
        <path d="M10 11q4-3 8-1l-2 8q-4-2-8 0z" fill="#ee6030" /><path d="M19 10.500q4 2 8 0l-2 8q-4 2-8 0z" fill="#8cc63e" /><path d="M8 19q4-2 8 0l-2 7q-4-2-8 0z" fill="#45a8e8" /><path d="M17 19.500q4 2 8 0l-2 7q-4 2-8 0z" fill="#fcc82c" />
      </Icon>
    </button>
    <div className="flex h-full flex-1 gap-1">
      {apps.map((a) => (
        <button key={a.name} aria-label={a.name} className={`flex w-[54px] items-center justify-center ${a.open ? `rounded-[3px] border ${a.open}` : ""}`}>{a.glyph}</button>
      ))}
    </div>
    <div className="flex gap-[7px]">
      {tray.map((t) => <button key={t.name} aria-label={t.name}><Icon className="size-4">{t.glyph}</Icon></button>)}
    </div>
    <time className="mr-[3px] ml-2 w-[60px] text-center font-['Open_Sans',sans-serif] text-[11px] leading-4 whitespace-nowrap text-white">11:32 PM<br />3/22/2017</time>
    <button aria-label="Show desktop" className="ml-1 h-full w-[11px] border-l-2 border-[#8fa5c5] bg-gradient-to-r from-[#1c3c6c] to-[#2a7a3a]" />
  </footer>
);

export default function App() {
  return (
    <div className="flex h-screen min-h-[720px] flex-col overflow-hidden bg-[#353535] font-['Roboto','Noto_Sans',sans-serif] text-[10px]">
      <MenuBar />
      <OptionsBar />
      <div className="flex min-h-0 flex-1">
        <ToolRail />
        <Document />
        <Dock />
        <Panels />
      </div>
      <Taskbar />
    </div>
  );
}
